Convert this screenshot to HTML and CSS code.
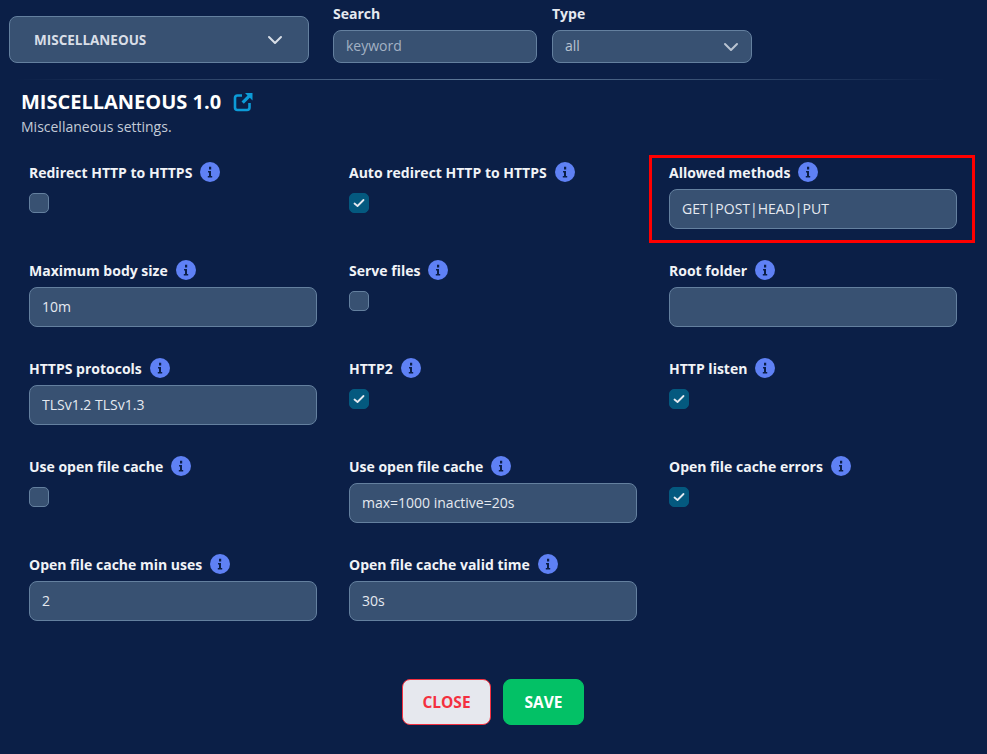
FILE: index.html
```html
<!DOCTYPE html>
<html lang="en">
<head>
    <meta charset="UTF-8">
    <meta name="viewport" content="width=device-width, initial-scale=1.0">
    <title>Miscellaneous settings</title>
    <link rel="stylesheet" href="styles.css">
</head>
<body>
    <svg width="0" height="0" class="sprites">
        <symbol id="info" viewBox="0 0 20 20">
            <circle cx="10" cy="10" r="10" fill="#5f81f5"/>
            <path d="M8 9h3v5h1.2v1.6H7.8V14H9v-3.400H8z M9 4.800h2.200v2.600H9z" fill="#0b1f47"/>
        </symbol>
        <symbol id="chevron" viewBox="0 0 16 10">
            <path d="M2 2l6 6 6-6" fill="none" stroke="currentColor" stroke-width="2" stroke-linecap="round" stroke-linejoin="round"/>
        </symbol>
        <symbol id="tick" viewBox="0 0 12 10">
            <path d="M1.500 5.500l3 2.500 6-6" fill="none" stroke="#e5e9f0" stroke-width="1.800" stroke-linecap="round" stroke-linejoin="round"/>
        </symbol>
    </svg>

    <header class="toolbar">
        <button class="plugin-select" type="button">
            <span>MISCELLANEOUS</span>
            <svg class="chevron"><use href="#chevron"/></svg>
        </button>
        <div class="filter filter-search">
            <label>Search</label>
            <input class="filter-box" type="text" placeholder="keyword">
        </div>
        <div class="filter filter-type">
            <label>Type</label>
            <div class="filter-box type-box">
                <span>all</span>
                <svg class="chevron"><use href="#chevron"/></svg>
            </div>
        </div>
    </header>

    <hr class="divider">

    <section class="intro">
        <h1>
            MISCELLANEOUS 1.0
            <svg class="external" viewBox="0 0 20 20">
                <path d="M9 3.500H4.500a2.500 2.500 0 0 0-2.500 2.500v9.500A2.500 2.500 0 0 0 4.500 18H14a2.500 2.500 0 0 0 2.500-2.500V11" fill="none" stroke="#0c9bd8" stroke-width="2.600"/>
                <path d="M12 1h7.500v7.500l-2.700-2.700-6 6-2.300-2.300 6-6z" fill="#0c9bd8"/>
            </svg>
        </h1>
        <p>Miscellaneous settings.</p>
    </section>

    <form class="settings">
        <div class="field">
            <div class="field-label">Redirect HTTP to HTTPS <svg class="info"><use href="#info"/></svg></div>
            <span class="check"></span>
        </div>
        <div class="field">
            <div class="field-label">Auto redirect HTTP to HTTPS <svg class="info"><use href="#info"/></svg></div>
            <span class="check checked"><svg><use href="#tick"/></svg></span>
        </div>
        <div class="field">
            <div class="field-label">Allowed methods <svg class="info"><use href="#info"/></svg></div>
            <input class="text-input" type="text" value="GET|POST|HEAD|PUT">
            <div class="highlight"></div>
        </div>

        <div class="field">
            <div class="field-label">Maximum body size <svg class="info"><use href="#info"/></svg></div>
            <input class="text-input" type="text" value="10m">
        </div>
        <div class="field">
            <div class="field-label">Serve files <svg class="info"><use href="#info"/></svg></div>
            <span class="check"></span>
        </div>
        <div class="field">
            <div class="field-label">Root folder <svg class="info"><use href="#info"/></svg></div>
            <input class="text-input" type="text" value="">
        </div>

        <div class="field">
            <div class="field-label">HTTPS protocols <svg class="info"><use href="#info"/></svg></div>
            <input class="text-input" type="text" value="TLSv1.2 TLSv1.3">
        </div>
        <div class="field">
            <div class="field-label">HTTP2 <svg class="info"><use href="#info"/></svg></div>
            <span class="check checked"><svg><use href="#tick"/></svg></span>
        </div>
        <div class="field">
            <div class="field-label">HTTP listen <svg class="info"><use href="#info"/></svg></div>
            <span class="check checked"><svg><use href="#tick"/></svg></span>
        </div>

        <div class="field">
            <div class="field-label">Use open file cache <svg class="info"><use href="#info"/></svg></div>
            <span class="check"></span>
        </div>
        <div class="field">
            <div class="field-label">Use open file cache <svg class="info"><use href="#info"/></svg></div>
            <input class="text-input" type="text" value="max=1000 inactive=20s">
        </div>
        <div class="field">
            <div class="field-label">Open file cache errors <svg class="info"><use href="#info"/></svg></div>
            <span class="check checked"><svg><use href="#tick"/></svg></span>
        </div>

        <div class="field">
            <div class="field-label">Open file cache min uses <svg class="info"><use href="#info"/></svg></div>
            <input class="text-input" type="text" value="2">
        </div>
        <div class="field">
            <div class="field-label">Open file cache valid time <svg class="info"><use href="#info"/></svg></div>
            <input class="text-input" type="text" value="30s">
        </div>
    </form>

    <div class="actions">
        <button class="btn btn-close" type="button">CLOSE</button>
        <button class="btn btn-save" type="button">SAVE</button>
    </div>
</body>
</html>
```

FILE: styles.css
```css
* {
    box-sizing: border-box;
}
html, body {
    height: 100%;
}
body {
    margin: 0;
    padding: 0;
    background: #0b1f47;
    color: #fff;
    font-family: "Open Sans", sans-serif;
    font-size: 14px;
    overflow: hidden;
}
.sprites {
    position: absolute;
}

/* top bar */
.toolbar {
    display: flex;
    align-items: flex-end;
    height: 63px;
    padding-left: 9px;
}
.plugin-select {
    display: flex;
    align-items: center;
    justify-content: space-between;
    width: 300px;
    height: 47px;
    padding: 0 25px 0 24px;
    background: #385172;
    border: 1px solid #64809f;
    border-radius: 8px;
    color: #d8dee7;
    font: 700 13.500px "Open Sans", sans-serif;
}
.chevron {
    width: 16px;
    height: 10px;
    color: #d8dee7;
}
.filter label {
    display: block;
    margin-bottom: 7px;
    font-size: 14px;
    font-weight: 700;
    line-height: 19px;
    color: #e5e9f0;
}
.filter-search {
    width: 204px;
    margin-left: 24px;
}
.filter-type {
    width: 200px;
    margin-left: 15px;
}
.filter-box {
    display: block;
    width: 100%;
    height: 33px;
    padding: 0 12px 2px;
    background: #385172;
    border: 1px solid #64809f;
    border-radius: 8px;
    color: #b9c3d1;
    font: 14px "Open Sans", sans-serif;
    outline: none;
}
.filter-box::placeholder {
    color: #a3b1c4;
    opacity: 1;
}
.type-box {
    display: flex;
    align-items: center;
    justify-content: space-between;
}
.type-box .chevron {
    color: #b9c3d1;
    margin-top: 2px;
}
.divider {
    width: 930px;
    height: 1px;
    margin: 16px 0 0 16px;
    border: 0;
    background: linear-gradient(90deg, #0b1f47, #5f7a9a 50%, #0b1f47);
}

/* plugin title */
.intro {
    padding: 9px 0 0 21px;
}
.intro h1 {
    display: flex;
    align-items: center;
    gap: 12px;
    margin: 0;
    font-size: 20px;
    font-weight: 700;
    line-height: 26px;
    color: #fff;
}
.external {
    width: 20px;
    height: 20px;
}
.intro p {
    margin: 2px 0 0;
    font-size: 14px;
    line-height: 19px;
    color: #c3cbd7;
}

/* settings grid */
.settings {
    display: grid;
    grid-template-columns: repeat(3, 288px);
    grid-auto-rows: 98px;
    column-gap: 32px;
    margin-top: 26px;
    padding-left: 29px;
}
.field {
    position: relative;
}
.field-label {
    display: flex;
    align-items: center;
    gap: 8px;
    height: 20px;
    margin-bottom: 7px;
    font-size: 14px;
    font-weight: 700;
    white-space: nowrap;
    color: #f1f3f7;
}
.info {
    width: 20px;
    height: 20px;
}
.text-input {
    display: block;
    width: 100%;
    height: 40px;
    padding: 0 12px 2px;
    background: #385172;
    border: 1px solid #64809f;
    border-radius: 8px;
    color: #e5e9f0;
    font: 14px "Open Sans", sans-serif;
    outline: none;
}
.check {
    display: flex;
    align-items: center;
    justify-content: center;
    width: 20px;
    height: 20px;
    margin-top: 11px;
    background: #385172;
    border: 1px solid #64809f;
    border-radius: 5px;
}
.check.checked {
    background: #04597f;
    border-color: #04597f;
}
.check svg {
    width: 12px;
    height: 10px;
}

/* red annotation round the allowed methods field */
.highlight {
    position: absolute;
    top: -7px;
    left: -20px;
    width: 326px;
    height: 88px;
    border: 3px solid #f00;
    pointer-events: none;
}

/* bottom buttons */
.actions {
    display: flex;
    justify-content: center;
    gap: 12px;
    margin-top: 27px;
    padding-right: 1px;
}
.btn {
    height: 46px;
    border-radius: 8px;
    font: 700 15.500px "Open Sans", sans-serif;
}
.btn-close {
    width: 89px;
    background: #e6e8ee;
    border: 1px solid #f4303f;
    color: #f4303f;
}
.btn-save {
    width: 81px;
    background: #03c166;
    border: 1px solid #03c166;
    color: #fff;
}
```
